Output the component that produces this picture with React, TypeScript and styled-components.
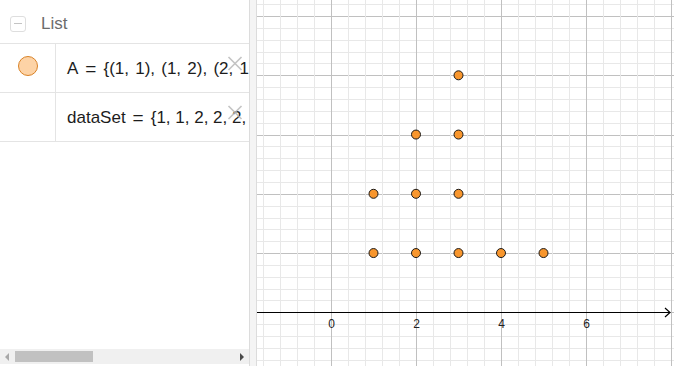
import React from "react";
import styled, { createGlobalStyle } from "styled-components";

const GlobalStyle = createGlobalStyle`
  html, body {
    margin: 0;
    padding: 0;
    background: #ffffff;
    overflow: hidden;
  }
  body {
    font-family: "Liberation Sans", Arial, sans-serif;
  }
`;

// graphics view geometry (local to the svg)
const VIEW_W = 417;
const VIEW_H = 366;
const ORIGIN_X = 74;
const ORIGIN_Y = 312.3;
const X_UNIT = 42.5;
const Y_UNIT = 59.25;

const points: [number, number][] = [
  [1, 1], [1, 2], [2, 1], [2, 2], [2, 3],
  [3, 1], [3, 2], [3, 3], [3, 4], [4, 1], [5, 1],
];

const Frame = styled.div`
  display: flex;
  width: 674px;
  height: 366px;
  overflow: hidden;
`;

const AlgebraPanel = styled.div`
  width: 249px;
  flex: none;
  display: flex;
  flex-direction: column;
  border-right: 1px solid #dcdcdc;
  background: #fff;
`;

const Header = styled.div`
  height: 44px;
  box-sizing: border-box;
  padding: 4px 0 0 10px;
  display: flex;
  align-items: center;
  gap: 15px;
  border-bottom: 1px solid #e4e4e4;
`;

const CollapseBox = styled.div`
  width: 14px;
  height: 14px;
  border: 1px solid #dedede;
  border-radius: 3px;
  display: flex;
  align-items: center;
  justify-content: center;

  &::after {
    content: "";
    width: 8px;
    height: 1.5px;
    background: #c4c4c4;
  }
`;

const HeaderTitle = styled.span`
  font-size: 17px;
  color: #6c6c6c;
`;

const Row = styled.div`
  position: relative;
  height: 48px;
  display: flex;
  border-bottom: 1px solid #e4e4e4;
`;

const MarbleCell = styled.div`
  width: 56px;
  flex: none;
  display: flex;
  justify-content: center;
  padding-top: 12px;
  box-sizing: border-box;
  border-right: 1px solid #e4e4e4;
`;

const Marble = styled.div`
  width: 18px;
  height: 18px;
  border-radius: 50%;
  background: #fdd3a6;
  border: 1px solid #d98227;
`;

const Formula = styled.div<{ $wordGap?: number }>`
  flex: 1;
  min-width: 0;
  display: flex;
  align-items: center;
  padding: 2px 0 0 11px;
  white-space: pre;
  overflow: hidden;
  font-size: 17px;
  word-spacing: ${(p) => p.$wordGap ?? 0}px;
  color: #1c1c1c;
`;

const Eq = styled.span`
  font-size: 19px;
  margin: 0 7px 0 7px;
  word-spacing: 0;
`;

const DeleteButton = styled.svg`
  position: absolute;
  top: 12px;
  right: 6px;
  width: 16px;
  height: 15px;
  opacity: 0.85;
`;

const Filler = styled.div`
  flex: 1;
`;

const HScroll = styled.div`
  height: 15px;
  margin-bottom: 2px;
  background: #f0f0f0;
  display: flex;
  align-items: center;
  padding: 0 5px;
  gap: 6px;
`;

const Arrow = styled.div<{ $dir: "left" | "right"; $color: string }>`
  width: 0;
  height: 0;
  border-top: 4px solid transparent;
  border-bottom: 4px solid transparent;
  ${(p) =>
    p.$dir === "left"
      ? `border-right: 4px solid ${p.$color};`
      : `border-left: 4px solid ${p.$color};`}
`;

const Track = styled.div`
  flex: 1;
  height: 11px;
  display: flex;
`;

const Thumb = styled.div`
  width: 78px;
  height: 11px;
  background: #c1c1c1;
`;

const Splitter = styled.div`
  width: 6px;
  flex: none;
  background: #f4f4f4;
  border-right: 1px solid #dcdcdc;
`;

const Graphics = styled.div`
  flex: 1;
  background: #fff;
  overflow: hidden;
`;

const CloseIcon = () => (
  <DeleteButton viewBox="0 0 16 15">
    <line x1="1.5" y1="1" x2="14.5" y2="14" stroke="#b9b9b9" strokeWidth="1.6" />
    <line x1="14.5" y1="1" x2="1.5" y2="14" stroke="#b9b9b9" strokeWidth="1.6" />
  </DeleteButton>
);

const px = (v: number) => Math.round(v) + 0.5;

const GridView = () => {
  const vLines: React.ReactNode[] = [];
  for (let k = -5; k * 17 + ORIGIN_X <= VIEW_W; k++) {
    const x = ORIGIN_X + k * 17;
    if (x < 0) continue;
    const major = k % 5 === 0;
    vLines.push(
      <line
        key={"v" + k}
        x1={px(x)}
        x2={px(x)}
        y1={0}
        y2={VIEW_H}
        stroke={major ? "#c0c0c0" : "#e8e8e8"}
        strokeWidth={1}
      />
    );
  }
  const hLines: React.ReactNode[] = [];
  for (let k = -30; k <= 5; k++) {
    const y = ORIGIN_Y + k * (Y_UNIT / 5);
    if (y < 0 || y > VIEW_H) continue;
    const major = k % 5 === 0;
    hLines.push(
      <line
        key={"h" + k}
        x1={0}
        x2={VIEW_W}
        y1={px(y)}
        y2={px(y)}
        stroke={major ? "#c0c0c0" : "#e8e8e8"}
        strokeWidth={1}
      />
    );
  }
  const axisY = px(ORIGIN_Y);

  return (
    <svg width={VIEW_W} height={VIEW_H} style={{ display: "block" }}>
      {hLines}
      {vLines}
      <line x1={0} x2={VIEW_W - 4} y1={axisY} y2={axisY} stroke="#000" strokeWidth={1.2} />
      <polyline
        points={`${VIEW_W - 9},${axisY - 4.5} ${VIEW_W - 4},${axisY} ${VIEW_W - 9},${axisY + 4.5}`}
        fill="none"
        stroke="#000"
        strokeWidth={1.2}
      />
      {[0, 2, 4, 6].map((n) => (
        <text
          key={n}
          x={ORIGIN_X + n * X_UNIT + 0.5}
          y={328}
          fontSize={12}
          fontFamily='"Liberation Sans", Arial, sans-serif'
          textAnchor="middle"
          fill="#222"
        >
          {n}
        </text>
      ))}
      {points.map(([a, b]) => (
        <circle
          key={`${a}-${b}`}
          cx={ORIGIN_X + a * X_UNIT}
          cy={ORIGIN_Y - b * Y_UNIT}
          r={4.5}
          fill="#f8962d"
          stroke="#1a1a1a"
          strokeWidth={1}
        />
      ))}
    </svg>
  );
};

export default function App() {
  return (
    <>
      <GlobalStyle />
      <Frame>
        <AlgebraPanel>
          <Header>
            <CollapseBox />
            <HeaderTitle>List</HeaderTitle>
          </Header>
          <Row>
            <MarbleCell>
              <Marble />
            </MarbleCell>
            <Formula $wordGap={1.5}>
              A<Eq>=</Eq>{"{(1, 1), (1, 2), (2, 1), (2, 2), (2, 3), (3, 1), (3, 2), (3, 3), (3, 4), (4, 1), (5, 1)}"}
            </Formula>
            <CloseIcon />
          </Row>
          <Row>
            <MarbleCell />
            <Formula>
              dataSet<Eq>=</Eq>{"{1, 1, 2, 2, 2, 3, 3, 3, 3, 4, 5}"}
            </Formula>
            <CloseIcon />
          </Row>
          <Filler />
          <HScroll>
            <Arrow $dir="left" $color="#a8a8a8" />
            <Track>
              <Thumb />
            </Track>
            <Arrow $dir="right" $color="#4a4a4a" />
          </HScroll>
        </AlgebraPanel>
        <Splitter />
        <Graphics>
          <GridView />
        </Graphics>
      </Frame>
    </>
  );
}
